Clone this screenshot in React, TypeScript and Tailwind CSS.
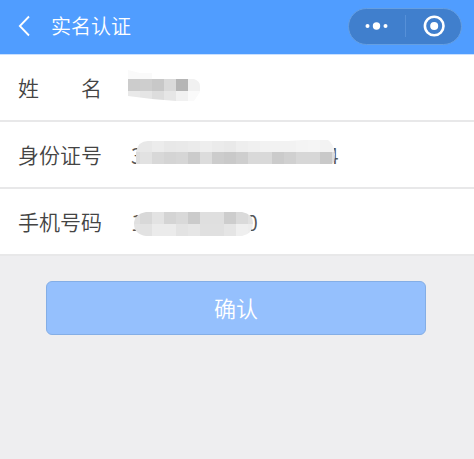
import type { ReactNode } from "react";

const GAP = "\u2007";

// every cell is a 12px block: [x, y, colour]
type Cell = [number, number, string];

const nameFaint = ["#fafafa", "#fafafa", "#fdfdfd", "#ffffff", "#ffffff", "#ffffff"];
const nameTop = ["#cccccc", "#cecece", "#c8c8c8", "#dadada", "#b5b5b5", "#f1f1f1"];
const nameBottom = ["#e9e9e9", "#e5e5e5", "#dddddd", "#e6e6e6", "#f1f1f1", "#fafafa"];

const idTop = ["#e8e8e8", "#e8e8e8", "#ececec", "#e8e8e8", "#e9e9e9", "#ebebeb", "#eeeeee", "#ebebeb", "#e9e9e9", "#eeeeee", "#f0f0f0", "#f2f2f2", "#f2f2f2", "#f2f2f2", "#f4f4f4", "#f5f5f5", "#f3f3f3", "#f5f5f5"];
const idBottom = ["#dddddd", "#e2e2e2", "#d8d8d8", "#d4d4d4", "#d6d6d6", "#cbcbcb", "#dcdcdc", "#cccccc", "#c9c9c9", "#cecece", "#d9d9d9", "#d9d9d9", "#cbcbcb", "#d0d0d0", "#d7d7d7", "#d7d7d7", "#c9c9c9", "#dddddd"];

const phoneTop = ["#e0e0e0", "#d8d8d8", "#e3e3e3", "#d4d4d4", "#d9d9d9", "#cbcbcb", "#dfdfdf", "#dfdfdf", "#cdcdcd", "#dadada", "#e1e1e1"];
const phoneBottom = ["#e4e4e4", "#e2e2e2", "#ebebeb", "#ebebeb", "#e3e3e3", "#e6e6e6", "#e0e0e0", "#e0e0e0", "#e5e5e5", "#efefef", "#ededed"];

const toCells = (colors: string[], y: number): Cell[] =>
  colors.map((color, i) => [i * 12, y, color]);

function Mosaic({ id, cells, shape }: { id: string; cells: Cell[]; shape: string }) {
  return (
    <svg className="absolute top-0 left-0" viewBox="0 0 216 36" width="216" height="36" aria-hidden="true">
      <clipPath id={id}>
        <path d={shape} />
      </clipPath>
      <g clipPath={`url(#${id})`} shapeRendering="crispEdges">
        {cells.map(([x, y, color]) => (
          <rect key={`${x}-${y}`} x={x} y={y} width="12" height="12" fill={color} />
        ))}
      </g>
    </svg>
  );
}

function Field({ id, label, value, children }: { id: string; label: ReactNode; value: string; children: ReactNode }) {
  return (
    <div className="flex h-[67px] items-center border-b-2 border-[#e8e8e9] bg-white pl-[18px]">
      <label htmlFor={id} className="flex w-[84px] shrink-0 justify-between text-[21px] font-[350] text-[#444444]">
        {label}
      </label>
      <div className="relative ml-[26px] flex-1">
        <input
          id={id}
          type="text"
          defaultValue={value}
          className="block h-9 w-full bg-transparent pl-[3px] text-[21px] font-[350] text-[#555555] outline-none"
        />
        {children}
      </div>
    </div>
  );
}

export default function App() {
  return (
    <div className="min-h-screen bg-[#eeeef0] font-['Noto_Sans_CJK_SC',sans-serif]">
      <header className="flex h-[55px] items-center border-b border-[#c9e0ff] bg-[#509dff] pr-3 pb-0.5 pl-[18px] text-white">
        <button type="button" aria-label="返回" className="shrink-0">
          <svg width="13" height="22" viewBox="0 0 13 22" fill="none" stroke="currentColor" strokeWidth="1.8">
            <path d="M11 1.5 L1.8 11 L11 20.5" />
          </svg>
        </button>
        <h1 className="ml-5 text-[20px] font-[350]">实名认证</h1>
        <div className="ml-auto flex h-[37px] w-[114px] items-center rounded-full border border-[#659fe2] bg-[#407fcd]">
          <button type="button" aria-label="更多" className="flex flex-1 justify-center">
            <svg width="24" height="8" viewBox="0 0 24 8" fill="currentColor">
              <circle cx="2.5" cy="4" r="2" />
              <circle cx="11.5" cy="4" r="3.7" />
              <circle cx="20.5" cy="4" r="2" />
            </svg>
          </button>
          <span className="h-[22px] w-px bg-[#5690d8]" />
          <button type="button" aria-label="关闭" className="flex flex-1 justify-center">
            <svg width="24" height="22" viewBox="0 0 24 22">
              <circle cx="13.2" cy="11" r="9.3" fill="none" stroke="currentColor" strokeWidth="2.6" />
              <circle cx="13.2" cy="11" r="4" fill="currentColor" />
            </svg>
          </button>
        </div>
      </header>

      <form>
        <Field id="name" label={<><span>姓</span><span>名</span></>} value="">
          <Mosaic
            id="name-mask"
            cells={[...toCells(nameFaint, -3), ...toCells(nameTop, 9), ...toCells(nameBottom, 21)]}
            shape="M0 0 L12 3 H24 V9 H66 Q72 11 72 16 V22 L66 31 H48 L24 29 L0 26 Z"
          />
        </Field>
        <Field id="id-card" label="身份证号" value={`3${GAP.repeat(16)}4`}>
          <Mosaic
            id="id-mask"
            cells={[...toCells(idTop, 3), ...toCells(idBottom, 15)]}
            shape="M8 27 V15 Q10 4 20 4 H160 L176 3 H200 Q206 7 207 17 Q207 25 204 27 Z"
          />
        </Field>
        <Field id="phone" label="手机号码" value={`1${GAP.repeat(9)}0`}>
          <Mosaic
            id="phone-mask"
            cells={[...toCells(phoneTop, 8), ...toCells(phoneBottom, 20)]}
            shape="M18 8 H114 Q125 10 125 19 Q125 30 114 32 H18 Q6 30 6 20 Q6 10 18 8 Z"
          />
        </Field>

        <div className="pt-[25px] pr-12 pl-[46px]">
          <button
            type="submit"
            className="h-[54px] w-full rounded-md border border-[#84aee6] bg-[#95c0fd] pb-0.5 text-[22px] font-[350] text-white"
          >
            确认
          </button>
        </div>
      </form>
    </div>
  );
}
